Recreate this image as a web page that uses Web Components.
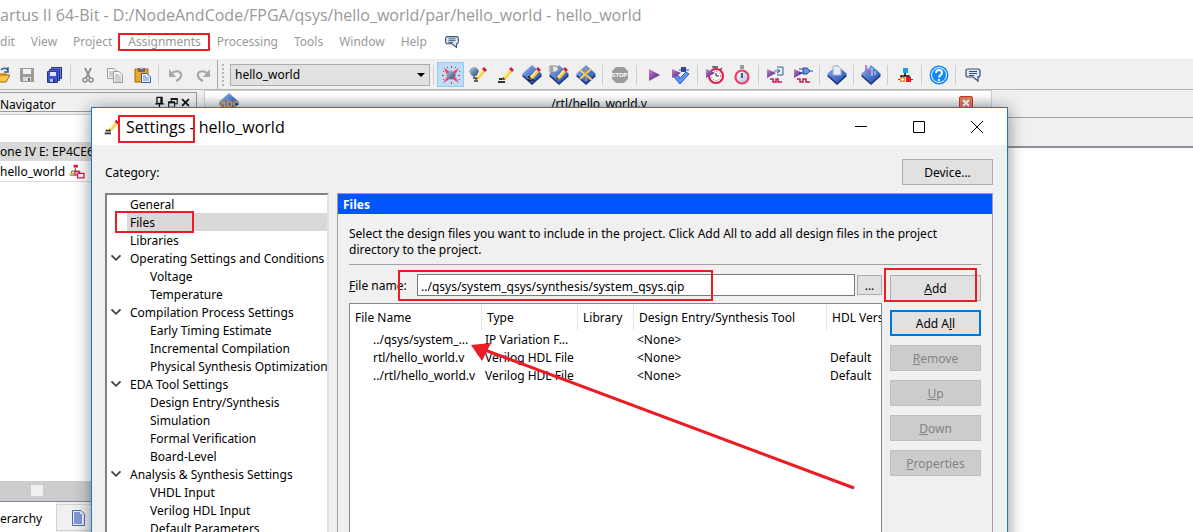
<!DOCTYPE html>
<html lang="en">
<head>
<meta charset="utf-8">
<title>Quartus II 64-Bit</title>
<style>
    html, body {
        height: 100%;
        margin: 0;
        overflow: hidden;
    }

    body {
        position: relative;
        display: flex;
        flex-direction: column;
        background: #f0f0f0;
        color: #000;
        font: 12px/18px "Noto Sans", "Open Sans", sans-serif;
    }

    .workspace {
        flex: 1;
        min-height: 0;
        display: flex;
        gap: 7px;
    }

    editor-area {
        flex: 1;
    }

    settings-dialog {
        position: absolute;
        left: 91px;
        right: 185px;
        top: 107px;
        bottom: -24px;
    }

    mark-box {
        position: absolute;
    }

    .arrow {
        position: absolute;
        left: 460px;
        top: 335px;
        pointer-events: none;
    }
</style>
</head>
<body>
    <title-bar>artus II 64-Bit - D:/NodeAndCode/FPGA/qsys/hello_world/par/hello_world - hello_world</title-bar>
    <menu-bar></menu-bar>
    <tool-bar></tool-bar>
    <div class="workspace">
        <project-navigator></project-navigator>
        <editor-area>/rtl/hello_world.v</editor-area>
    </div>

    <settings-dialog>
        <span slot="title">Settings - hello_world</span>
        <category-tree slot="tree"></category-tree>
        <files-page slot="page"></files-page>
    </settings-dialog>

    <mark-box style="left:118px;top:33px;width:92px;height:18px"></mark-box>
    <mark-box style="left:118px;top:115px;width:77px;height:28px"></mark-box>
    <mark-box style="left:115px;top:211px;width:79px;height:22px"></mark-box>
    <mark-box style="left:398px;top:270px;width:315px;height:31px"></mark-box>
    <mark-box style="left:884px;top:268px;width:93px;height:34px"></mark-box>
    <svg class="arrow" width="400" height="160" viewBox="460 335 400 160">
        <path d="M482 349L854 488" stroke="#ed1c24" stroke-width="3"/>
        <path d="M471 345L491 343L482 361Z" fill="#ed1c24"/>
    </svg>

<script>
    // 20x20 artwork, one entry per icon
    const DIAMOND = '<path d="M10 1L20 11L10 20L0 11Z" fill="#16307c"/><path d="M10 0L20 9L10 18L0 9Z" fill="url(#b)"/>';
    const PENCIL = '<path d="M8 12L15 4L18 6L11 14L7 15Z" fill="#f5cd3c"/><path d="M8 12L15 4L16 5L9 13Z" fill="#fff0a0"/><path d="M14 4L16 2L19 5L17 7Z" fill="#d81848"/><path d="M7 15L8 12L10 14Z" fill="#333"/>';
    const PLAY = '<path d="M1 4L10 8L1 13Z" fill="url(#p)"/>';
    const ICONS = {
        open: '<path d="M2 6H8L10 8H17V17H2Z" fill="#d9a83a"/><path d="M6 10H20L16 17H2Z" fill="#ffc64a" stroke="#9a6b12"/><path d="M11 5C14 2 17 3 18 6M18 2V7H14" fill="none" stroke="#2d5fa8" stroke-width="1.5"/>',
        save: '<path d="M3 3H17V17H4L3 16Z" fill="#9b9b9b"/><path d="M6 4H14V9H6Z" fill="#f2f2f2"/><path d="M6 12H14V16H6Z" fill="#ddd"/><path d="M11 13H13V16H11Z" fill="#777"/>',
        saveall: '<g stroke="#26348f"><path d="M7.500 2.500H17.500V13.500H7.500Z" fill="#6573d8"/><path d="M5.500 4.500H15.500V15.500H5.500Z" fill="#5565cf"/><path d="M3.500 6.500H13.500V17.500H3.500Z" fill="#4156c8"/></g><path d="M6 7H12V11H6Z" fill="#dfe6ff"/><path d="M6 14H11V17H6Z" fill="#b8c4f4"/><path d="M9 14H11V17H9Z" fill="#27349a"/>',
        cut: '<path d="M7 3L12 13M13 3L8 13" stroke="#8d8d8d" stroke-width="1.8"/><g fill="none" stroke="#8d8d8d" stroke-width="1.5"><circle cx="7" cy="15" r="2"/><circle cx="13" cy="15" r="2"/></g>',
        copy: '<g fill="#f4f4f4" stroke="#9a9a9a"><path d="M2.500 3.500H9L11.500 6V13.500H2.500Z"/><path d="M8.500 6.500H14L17.500 10V17.500H8.500Z"/></g><path d="M4 7H8M4 9H8M4 11H8M10 10H14M10 12H16M10 14H16M10 16H16" stroke="#aaa"/>',
        paste: '<path d="M3 4H16V17H3Z" fill="#e9a927" stroke="#9a6a14"/><path d="M6 3H13V7H6Z" fill="#6b6b6b"/><path d="M8 2H11V4H8Z" fill="#c9c9c9"/><path d="M9.500 8.500H15L18.500 12V17.500H9.500Z" fill="#eef3ff" stroke="#3d5a9a"/><path d="M11 11H14M11 13H17M11 15H17" stroke="#6a86c8"/>',
        undo: '<path d="M6 8C10 5 16 6 15 11C14.500 14 12 15 10 16" fill="none" stroke="#a8a8a8" stroke-width="2.200"/><path d="M3 4V12H10Z" fill="#a8a8a8"/>',
        redo: '<path d="M14 8C10 5 4 6 5 11C5.500 14 8 15 10 16" fill="none" stroke="#a8a8a8" stroke-width="2.200"/><path d="M17 4V12H10Z" fill="#a8a8a8"/>',
        settings: '<path d="M3 3L8 6L10 9L13 6L18 3L15 8L13 10L15 13L18 18L13 15L10 13L7 15L2 18L6 12L7 10L5 8Z" fill="#ee4470"/><g fill="#e81f50"><path d="M10 1h1v2h-1zM10 17h1v2h-1zM1 10h2v1h-2zM17 10h2v1h-2zM6 2h1v1h-1zM14 2h1v1h-1zM2 6h1v1h-1zM18 6h1v1h-1zM2 14h1v1h-1zM18 14h1v1h-1z"/></g><path d="M10 5L15 10L10 15L5 10Z" fill="url(#g)"/>',
        assign: '<path d="M6 2L9 3L11 6L9 10L6 12L3 10L1 6L3 3Z" fill="url(#g)"/><path d="M5 13H11M6 16H10" stroke="#333" stroke-width="1.500"/>' + PENCIL,
        pencil: '<path d="M4 14H10M3 17H10" stroke="#333" stroke-width="2"/>' + PENCIL,
        pins: DIAMOND + '<path d="M6 12H12M6 15H12" stroke="#111" stroke-width="1.500"/>' + PENCIL,
        gate: DIAMOND + '<path d="M1 1H7L10 4L7 7H1Z" fill="#e4e4e4" stroke="#888"/><path d="M3 2V6" stroke="#555"/>' + PENCIL,
        planner: DIAMOND + '<path d="M4 5L16 15M15 4L4 14" stroke="#f6cd58" stroke-width="2"/><path d="M10 3V16" stroke="#d7a83a"/>',
        stop: '<path d="M6 2H14L18 6V14L14 18H6L2 14V6Z" fill="#9b9b9b"/>',
        play: '<path d="M5 4L16 10L5 16Z" fill="url(#p)"/>',
        check: PLAY + '<path d="M3 12L7 10L9 13L15 7L18 9L9 19Z" fill="#5b94f2" stroke="#2f5fb7"/><path d="M10 2H15V7H10Z" fill="#2b4aa0"/><path d="M8 5H18" stroke="#2b4aa0"/>',
        clock: '<path d="M10 1V4M7 2H13M17 3L15 5" stroke="#555" stroke-width="1.500"/><circle cx="11" cy="11" r="7" fill="#fff" stroke="#e02050" stroke-width="2.200"/><circle cx="11" cy="11" r="4.500" fill="none" stroke="#444" stroke-dasharray="1 2"/><path d="M11 11V8M11 11H14" stroke="#222"/>' + PLAY,
        watch: '<path d="M8 0H12V4H8Z" fill="#999"/><circle cx="10" cy="12" r="6.500" fill="url(#w)" stroke="#ef3d62" stroke-width="2.200"/><path d="M10 8V13" stroke="#333" stroke-width="1.500"/>',
        rtlsim: PLAY + '<path d="M11 2H17V10H11" fill="#dce9f8" stroke="#49627f"/><path d="M8 6H13M11 4L14 6L11 8" fill="none" stroke="#49627f"/><path d="M4 14H7V17H10V14H12V17H16" fill="none" stroke="#c8194b" stroke-width="1.500"/>',
        gatesim: PLAY + '<path d="M10 3H14L17 6L14 9H10Z" fill="#6893e0" stroke="#27469b"/><path d="M6 4H10M6 8H10M17 6H20" stroke="#27469b"/><path d="M4 14H7V17H10V14H13V17H17" fill="none" stroke="#c8194b" stroke-width="1.500"/>',
        prog: DIAMOND + '<path d="M6 1H11L14 4V10H6Z" fill="#e6edfa" stroke="#a2b0cc"/>',
        tap: DIAMOND + '<path d="M5 0V6H10V11" fill="none" stroke="#b05fb0" stroke-width="1.500"/><path d="M8 0V4M11 3V11M14 6V10" stroke="#d9e6ff"/>',
        qsys: '<path d="M10 8V11M6 14V11H14V14" fill="none" stroke="#111" stroke-width="1.500"/><path d="M8 3H13V8H8Z" fill="#13a2e8"/><path d="M5 12H10V17H5Z" fill="#ff8a2b"/><path d="M11 12H16V17H11Z" fill="#f0112b"/><path d="M3 14.500H5M16 14.500H18" stroke="#555"/><path d="M6 14.500H9M7.500 13V16" stroke="#fff"/>',
        help: '<circle cx="10" cy="10" r="8.500" fill="#1387ff" stroke="#1387ff" stroke-width="2"/><circle cx="10" cy="10" r="7.500" fill="none" stroke="#fff"/><path d="M7 8C7 4 13 4 13 8C13 10 10 10 10 12.500" fill="none" stroke="#fff" stroke-width="2"/><path d="M9 14h2v2h-2z" fill="#fff"/>',
        note: '<path d="M5 4H15Q17 4 17 6V10Q17 12 15 12V16L10 12H5Q3 12 3 10V6Q3 4 5 4Z" fill="#dfe9fa" stroke="#36506e" stroke-width="1.200"/><path d="M6 6.500H14M6 8.500H14M6 10.500H11" stroke="#36506e"/>',
        tree: '<path d="M7 5V9M3 12V9H12V11" fill="none" stroke="#444"/><path d="M5 2H10V5H5Z" fill="#e01848"/><path d="M1 11H6V13H1Z" fill="#f0c429"/><path d="M1 13.500H6" stroke="#1a65ad"/><path d="M6.500 9.500H11.500V13.500H6.500Z" fill="#fff" stroke="#e01848" stroke-width="1.500"/><path d="M9.500 11.500H16.500V16.500H9.500Z" fill="#fff" stroke="#e01848" stroke-width="1.500"/>',
        page: '<path d="M4.500 2.500H13L16.500 6V17.500H4.500Z" fill="#eaf1ff" stroke="#4968b0"/><path d="M6 5H12M6 7H14M6 9H14M6 11H14M6 13H14M6 15H14" stroke="#203cae"/>',
        cap: DIAMOND,
        pin: '<path d="M7 4H13V11H7ZM5 11.500H15M10 12V17" fill="none" stroke="#111" stroke-width="1.500"/><path d="M12 4V11" stroke="#111" stroke-width="2"/>',
        float: '<path d="M8.500 5.500H15.500V11.500H8.500Z" fill="none" stroke="#111" stroke-width="1.200"/><path d="M8 5H16V7H8Z" fill="#111"/><path d="M5.500 9.500H12.500V15.500H5.500Z" fill="#f0f0f0" stroke="#111" stroke-width="1.200"/><path d="M5 9H13V11H5Z" fill="#111"/>',
        close: '<path d="M6 6L14 14M14 6L6 14" stroke="#111" stroke-width="2"/>',
        chevron: '<path d="M5 7L10 12L15 7" fill="none" stroke="#404040" stroke-width="2"/>'
    };

    const GRADIENTS = `
        <defs>
            <linearGradient id="b" x2="1" y2="1"><stop stop-color="#9dbaf0"/><stop offset=".5" stop-color="#4f7bcf"/><stop offset="1" stop-color="#2447a0"/></linearGradient>
            <linearGradient id="g" x2="1" y2="1"><stop stop-color="#b7d2f2"/><stop offset="1" stop-color="#233c6d"/></linearGradient>
            <linearGradient id="p" x2="1" y2="1"><stop stop-color="#c084d8"/><stop offset="1" stop-color="#4c1764"/></linearGradient>
            <linearGradient id="w" x2="1" y2="1"><stop stop-color="#fff"/><stop offset="1" stop-color="#9cc0f0"/></linearGradient>
        </defs>`;

    // Small helper so each element only lists its markup
    function define(name, markup) {
        const template = document.createElement('template');
        template.innerHTML = markup;
        customElements.define(name, class extends HTMLElement {
            constructor() {
                super();
                this.attachShadow({ mode: 'open' }).append(template.content.cloneNode(true));
            }
        });
    }

    class UiIcon extends HTMLElement {
        connectedCallback() {
            if (this.shadowRoot) return;
            this.attachShadow({ mode: 'open' });
            this.shadowRoot.innerHTML = `
                <style>
                    :host { display: inline-block; width: 20px; height: 20px; flex: none; }
                    svg { display: block; width: 100%; height: 100%; }
                </style>
                <svg viewBox="0 0 20 20" aria-hidden="true">${GRADIENTS}${ICONS[this.getAttribute('name')]}</svg>
            `;
        }
    }
    customElements.define('ui-icon', UiIcon);

    define('mark-box', `
        <style>
            :host { display: block; box-sizing: border-box; border: 2px solid #ed1c24; pointer-events: none; }
        </style>
    `);

    define('title-bar', `
        <style>
            :host {
                display: block;
                padding: 3px 0;
                background: #fff;
                color: #999;
                font: 16px/24px "Open Sans", "Noto Sans", sans-serif;
                white-space: nowrap;
            }
        </style>
        <slot></slot>
    `);

    define('menu-bar', `
        <style>
            :host { display: block; background: #fff; border-bottom: 1px solid #ebebeb; }
            nav { display: flex; align-items: center; gap: 16px; height: 23px; padding-bottom: 6px; }
            a { color: #999; text-decoration: none; }
            ui-icon { display: block; width: 18px; height: 18px; }
        </style>
        <nav>
            <a href="#">dit</a>
            <a href="#">View</a>
            <a href="#">Project</a>
            <a href="#">Assignments</a>
            <a href="#">Processing</a>
            <a href="#">Tools</a>
            <a href="#">Window</a>
            <a href="#">Help</a>
            <a href="#" aria-label="Feedback"><ui-icon name="note"></ui-icon></a>
        </nav>
    `);

    class ToolButton extends HTMLElement {
        connectedCallback() {
            if (this.shadowRoot) return;
            const icon = this.getAttribute('icon');
            this.attachShadow({ mode: 'open' });
            this.shadowRoot.innerHTML = `
                <style>
                    :host { display: block; flex: none; }
                    button {
                        display: grid;
                        place-items: center;
                        width: 27px;
                        height: 25px;
                        padding: 0;
                        border: 1px solid transparent;
                        background: none;
                        font: bold 6px/20px "Liberation Sans", sans-serif;
                        color: #fff;
                    }
                    :host([active]) button { background: #c0dcf3; border-color: #90c8f6; }
                    button > * { grid-area: 1 / 1; }
                    slot { display: block; }
                </style>
                <button type="button" aria-label="${icon}"><ui-icon name="${icon}"></ui-icon><slot></slot></button>
            `;
        }
    }
    customElements.define('tool-button', ToolButton);

    define('tool-separator', `
        <style>
            :host { display: block; flex: none; width: 1px; height: 20px; margin: 0 3px; background: #cfcfcf; }
        </style>
    `);

    define('tool-bar', `
        <style>
            :host {
                display: flex;
                align-items: center;
                height: 29px;
                border-bottom: 1px solid #b4b4b4;
                background: #f0f0f0;
                overflow: hidden;
            }
            .group { display: flex; align-items: center; }
            .file { margin-left: -14px; padding-right: 1px; }
            .grip { display: flex; align-self: stretch; align-items: center; width: 12px; border-left: 1px solid #a8a8a8; }
            .grip i { width: 2px; height: 22px; margin-left: 4px; background: repeating-linear-gradient(#b8b8b8 0 2px, transparent 2px 4px); }
            select {
                width: 200px;
                height: 22px;
                padding: 0 4px;
                border: 1px solid #adadad;
                border-radius: 0;
                appearance: none;
                font: inherit;
                color: #000;
                background: #e1e1e1;
            }
            .combo { display: flex; align-items: center; position: relative; }
            .combo svg { position: absolute; right: 5px; pointer-events: none; }
        </style>
        <div class="group file">
            <tool-button icon="open"></tool-button>
            <tool-button icon="save"></tool-button>
            <tool-button icon="saveall"></tool-button>
            <tool-separator></tool-separator>
            <tool-button icon="cut"></tool-button>
            <tool-button icon="copy"></tool-button>
            <tool-button icon="paste"></tool-button>
            <tool-separator></tool-separator>
            <tool-button icon="undo"></tool-button>
            <tool-button icon="redo"></tool-button>
        </div>
        <div class="grip"><i></i></div>
        <div class="combo">
            <select aria-label="Revision"><option>hello_world</option></select>
            <svg width="8" height="4"><path d="M0 0H8L4 4Z"/></svg>
        </div>
        <div class="group">
            <tool-separator></tool-separator>
            <tool-button icon="settings" active></tool-button>
            <tool-button icon="assign"></tool-button>
            <tool-button icon="pencil"></tool-button>
            <tool-button icon="pins"></tool-button>
            <tool-button icon="gate"></tool-button>
            <tool-button icon="planner"></tool-button>
            <tool-separator></tool-separator>
            <tool-button icon="stop">STOP</tool-button>
            <tool-separator></tool-separator>
            <tool-button icon="play"></tool-button>
            <tool-button icon="check"></tool-button>
            <tool-separator></tool-separator>
            <tool-button icon="clock"></tool-button>
            <tool-button icon="watch"></tool-button>
            <tool-separator></tool-separator>
            <tool-button icon="rtlsim"></tool-button>
            <tool-button icon="gatesim"></tool-button>
            <tool-separator></tool-separator>
            <tool-button icon="prog"></tool-button>
            <tool-separator></tool-separator>
            <tool-button icon="tap"></tool-button>
            <tool-separator></tool-separator>
            <tool-button icon="qsys"></tool-button>
            <tool-separator></tool-separator>
            <tool-button icon="help"></tool-button>
            <tool-separator></tool-separator>
            <tool-button icon="note"></tool-button>
        </div>
    `);

    define('project-navigator', `
        <style>
            :host { display: flex; flex-direction: column; flex: none; width: 197px; padding-top: 2px; white-space: nowrap; }
            header {
                display: flex;
                align-items: center;
                height: 18px;
                padding-right: 4px;
                border: 1px solid #999;
                border-left: 0;
            }
            header span { flex: 1; padding-top: 6px; }
            header ui-icon { width: 17px; height: 17px; margin: 0 -2px; }
            .tree { flex: 1; margin-top: 2px; border-top: 1px solid #c8c8c8; background: #fff; }
            .head { height: 27px; }
            .row { display: flex; align-items: center; gap: 4px; height: 19px; line-height: 20px; }
            .device { background: #d9d9d9; }
            .top { padding-top: 1px; border-bottom: 1px solid #dcdcdc; }
            .top ui-icon { width: 18px; height: 18px; }
            .scroll { height: 11px; padding: 4px 0 4px 31px; background: #cdcdcd; border-bottom: 1px solid #cdcdcd; }
            .scroll i { display: block; width: 12px; height: 11px; background: #f0f0f0; }
            .tabs { display: flex; height: 30px; border-top: 1px solid #85859a; background: #f0f0f0; }
            .tabs button {
                display: flex;
                align-items: center;
                height: 27px;
                padding: 0;
                border: 0;
                background: #fff;
                color: inherit;
                font: inherit;
            }
            .tabs .current { width: 56px; height: 30px; padding-top: 3px; }
            .tabs .files { margin-top: 2px; padding: 0 11px; background: #f0f0f0; border: 1px solid #d2d2d2; }
        </style>
        <header><span>Navigator</span><ui-icon name="pin"></ui-icon><ui-icon name="float"></ui-icon><ui-icon name="close"></ui-icon></header>
        <div class="tree">
            <div class="head"></div>
            <div class="row device">one IV E: EP4CE6</div>
            <div class="row top">hello_world<ui-icon name="tree"></ui-icon></div>
        </div>
        <div class="scroll"><i></i></div>
        <div class="tabs">
            <button type="button" class="current">erarchy</button>
            <button type="button" class="files" aria-label="Files"><ui-icon name="page"></ui-icon></button>
        </div>
    `);

    define('editor-area', `
        <style>
            :host { display: flex; flex-direction: column; min-width: 0; }
            .bar { height: 27px; border-bottom: 1px solid #a0a0a0; background: #f0f0f0; }
            .tab {
                box-sizing: border-box;
                display: flex;
                align-items: flex-start;
                height: 27px;
                margin-right: 201px;
                padding: 2px 18px 0 14px;
                border: 1px solid #cfcfcf;
                border-bottom: 0;
                background: linear-gradient(#fff 20%, #c8c8c8);
            }
            .name { flex: 1; text-align: center; padding: 2px 0 0; }
            .abc { display: grid; place-items: center; font: bold 11px/16px "Liberation Sans", sans-serif; color: #c9953c; }
            .abc > * { grid-area: 1 / 1; }
            .abc span { z-index: 1; }
            button { width: 14px; height: 14px; margin: 3px 0 0; padding: 0; border: 1px solid #c43423; border-radius: 2px; background: #dc7c5c; }
            svg { display: block; margin: auto; }
            .strip { height: 28px; border-bottom: 2px solid #90909a; }
            .page { flex: 1; background: #fff; }
        </style>
        <div class="bar">
            <div class="tab">
                <div class="abc"><ui-icon name="cap"></ui-icon><span>abc</span></div>
                <div class="name"><slot></slot></div>
                <button type="button" aria-label="Close file"><svg width="8" height="8"><path d="M1 1L7 7M7 1L1 7" stroke="#fff" stroke-width="2"/></svg></button>
            </div>
        </div>
        <div class="strip"></div>
        <div class="page"></div>
    `);

    define('push-button', `
        <style>
            :host { display: block; }
            button {
                display: block;
                width: 100%;
                height: 26px;
                padding: 2px 0 0;
                border: 1px solid #adadad;
                background: #e1e1e1;
                color: #000;
                font: inherit;
            }
            :host([small]) button { height: 20px; line-height: 16px; }
            :host([default]) button { border: 2px solid #0078d7; }
            :host([disabled]) button { border-color: #bfbfbf; background: #ccc; color: #838383; }
        </style>
        <button type="button"><slot></slot></button>
    `);

    define('settings-dialog', `
        <style>
            :host {
                display: flex;
                flex-direction: column;
                box-sizing: border-box;
                border: 1px solid #1979ca;
                background: #f0f0f0;
                box-shadow: 0 2px 16px rgba(0, 0, 0, 0.45);
            }
            header { display: flex; align-items: center; height: 37px; padding: 0 16px 0 10px; background: #fff; }
            .title { flex: 1; padding-left: 6px; font: 16px/24px "Open Sans", "Noto Sans", sans-serif; }
            header ui-icon { width: 18px; height: 18px; }
            .controls { display: flex; gap: 30px; }
            .controls button { display: grid; place-items: center; width: 28px; height: 28px; padding: 0; border: 0; background: none; }
            .top { display: flex; justify-content: space-between; align-items: center; padding: 14px 14px 8px 13px; }
            .top span { padding-top: 2px; }
            .top push-button { width: 91px; }
            .columns { flex: 1; min-height: 0; display: flex; gap: 8px; padding: 0 14px 0 13px; }
            .columns ::slotted([slot=tree]) { flex: none; width: 224px; }
            .columns ::slotted([slot=page]) { flex: 1; }
        </style>
        <header>
            <ui-icon name="pencil"></ui-icon>
            <div class="title"><slot name="title"></slot></div>
            <div class="controls">
                <button type="button" aria-label="Minimize"><svg width="12" height="12"><path d="M0 5.500H12" stroke="#000"/></svg></button>
                <button type="button" aria-label="Maximize"><svg width="12" height="12"><path d="M.5.5H11.500V11.500H.5Z" fill="none" stroke="#000"/></svg></button>
                <button type="button" aria-label="Close"><svg width="12" height="12"><path d="M0 0L12 12M12 0L0 12" stroke="#000"/></svg></button>
            </div>
        </header>
        <div class="top"><span>Category:</span><push-button>Device...</push-button></div>
        <div class="columns"><slot name="tree"></slot><slot name="page"></slot></div>
    `);

    const CATEGORIES = [
        ['General'],
        ['Files'],
        ['Libraries'],
        ['Operating Settings and Conditions', 'Voltage', 'Temperature'],
        ['Compilation Process Settings', 'Early Timing Estimate', 'Incremental Compilation', 'Physical Synthesis Optimization'],
        ['EDA Tool Settings', 'Design Entry/Synthesis', 'Simulation', 'Formal Verification', 'Board-Level'],
        ['Analysis &amp; Synthesis Settings', 'VHDL Input', 'Verilog HDL Input', 'Default Parameters']
    ];

    class CategoryTree extends HTMLElement {
        connectedCallback() {
            this.attachShadow({ mode: 'open' });
            this.shadowRoot.innerHTML = `
                <style>
                    :host {
                        display: block;
                        box-sizing: border-box;
                        border: 2px solid;
                        border-color: #828282 #e3e3e3 #e3e3e3 #828282;
                        background: #fff;
                        overflow: hidden;
                        white-space: nowrap;
                    }
                    ul { margin: 0; padding: 0; list-style: none; }
                    .row { display: flex; align-items: center; height: 18px; }
                    .twist { flex: none; display: flex; width: 20px; }
                    .twist ui-icon { width: 18px; height: 18px; }
                    .label { flex: 1; height: 18px; padding-left: 3px; line-height: 20px; }
                    .selected .label { background: #d9d9d9; }
                    ul ul { padding-left: 20px; }
                </style>
                <ul>
                    ${CATEGORIES.map(([name, ...children]) => `
                        <li>
                            <div class="row ${name === 'Files' ? 'selected' : ''}">
                                <span class="twist">${children.length ? '<ui-icon name="chevron"></ui-icon>' : ''}</span>
                                <span class="label">${name}</span>
                            </div>
                            <ul>${children.map(child => `<li class="row"><span class="twist"></span><span class="label">${child}</span></li>`).join('')}</ul>
                        </li>
                    `).join('')}
                </ul>
            `;
        }
    }
    customElements.define('category-tree', CategoryTree);

    define('file-table', `
        <style>
            :host { display: block; border: 1px solid #828790; background: #fff; overflow: hidden; }
            table { width: 600px; table-layout: fixed; border-collapse: collapse; }
            th, td { padding: 2px 0 0; line-height: 16px; text-align: left; font-weight: normal; white-space: nowrap; overflow: hidden; }
            th { height: 24px; padding-left: 5px; box-shadow: inset -1px 0 #e5e5e5; }
            td { padding-left: 3px; }
            td:first-child { padding-left: 23px; }
            .name { width: 132px; }
            .type { width: 96px; }
            .lib { width: 56px; }
            .tool { width: 193px; }
        </style>
        <table>
            <colgroup><col class="name"><col class="type"><col class="lib"><col class="tool"><col></colgroup>
            <thead><tr><th>File Name</th><th>Type</th><th>Library</th><th>Design Entry/Synthesis Tool</th><th>HDL Version</th></tr></thead>
            <tbody>
                <tr><td>../qsys/system_...</td><td>IP Variation F...</td><td></td><td>&lt;None&gt;</td><td></td></tr>
                <tr><td>rtl/hello_world.v</td><td>Verilog HDL File</td><td></td><td>&lt;None&gt;</td><td>Default</td></tr>
                <tr><td>../rtl/hello_world.v</td><td>Verilog HDL File</td><td></td><td>&lt;None&gt;</td><td>Default</td></tr>
            </tbody>
        </table>
    `);

    define('files-page', `
        <style>
            :host {
                display: flex;
                flex-direction: column;
                box-sizing: border-box;
                min-width: 0;
                border: 1px solid #a0a0a0;
            }
            h2 { margin: 0; padding: 2px 5px 0; background: #05f; color: #fff; font-size: 12px; line-height: 18px; }
            .content { flex: 1; min-height: 0; display: flex; flex-direction: column; padding: 12px 11px 0; }
            p { margin: 0; padding-bottom: 6px; line-height: 16px; border-bottom: 1px solid #a0a0a0; }
            .columns { flex: 1; min-height: 0; display: flex; gap: 8px; padding-top: 9px; }
            .main { flex: 1; min-width: 0; display: flex; flex-direction: column; gap: 7px; }
            .field { display: flex; align-items: center; gap: 2px; }
            label { flex: none; width: 66px; padding-top: 2px; }
            input {
                flex: 1;
                min-width: 0;
                box-sizing: border-box;
                height: 22px;
                padding: 2px 3px 0;
                border: 1px solid #7a7a7a;
                font: inherit;
            }
            .field push-button { width: 25px; }
            file-table { flex: 1; }
            .side { flex: none; display: flex; flex-direction: column; gap: 9px; width: 91px; padding-top: 1px; }
        </style>
        <h2>Files</h2>
        <div class="content">
            <p>Select the design files you want to include in the project. Click Add All to add all design files in the project directory to the project.</p>
            <div class="columns">
                <div class="main">
                    <div class="field">
                        <label for="file"><u>F</u>ile name:</label>
                        <input id="file" type="text" value="../qsys/system_qsys/synthesis/system_qsys.qip">
                        <push-button small>...</push-button>
                    </div>
                    <file-table></file-table>
                </div>
                <div class="side">
                    <push-button><u>A</u>dd</push-button>
                    <push-button default>Add A<u>l</u>l</push-button>
                    <push-button disabled><u>R</u>emove</push-button>
                    <push-button disabled><u>U</u>p</push-button>
                    <push-button disabled><u>D</u>own</push-button>
                    <push-button disabled><u>P</u>roperties</push-button>
                </div>
            </div>
        </div>
    `);
</script>
</body>
</html>
